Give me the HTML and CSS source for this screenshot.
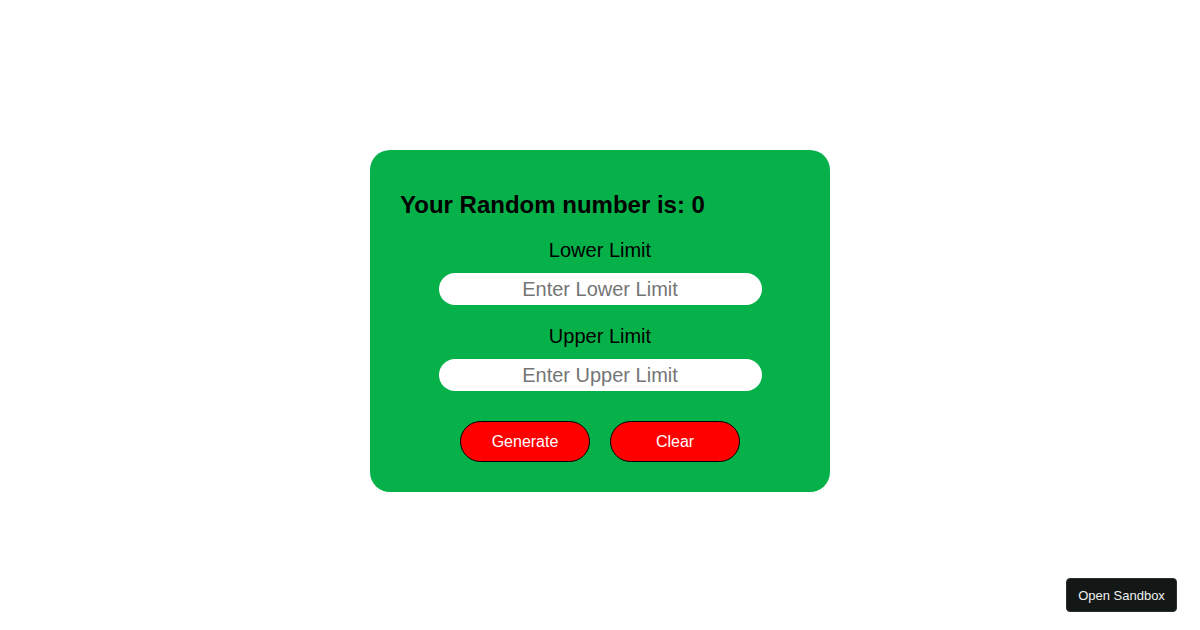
FILE: index.html
```html
<!DOCTYPE html>
<html>
<head>
<meta charset="utf-8">
<link rel="stylesheet" href="styles.css">
</head>
<body>
<main class="page">
  <section class="card">
    <h2 class="result">Your Random number is: 0</h2>
    <div class="field">
      <label class="label" for="lower">Lower Limit</label>
      <input class="input" id="lower" type="number" placeholder="Enter Lower Limit">
    </div>
    <div class="field">
      <label class="label" for="upper">Upper Limit</label>
      <input class="input" id="upper" type="number" placeholder="Enter Upper Limit">
    </div>
    <div class="actions">
      <button class="btn">Generate</button>
      <button class="btn">Clear</button>
    </div>
  </section>
</main>
<a class="sandbox" href="#">Open Sandbox</a>
</body>
</html>
```
FILE: styles.css
```css
html, body {
  margin: 0;
  padding: 0;
  background: #ffffff;
  font-family: "Liberation Sans", Arial, sans-serif;
}
.page {
  height: 630px;
  box-sizing: border-box;
  padding-top: 150px;
  display: flex;
  justify-content: center;
  align-items: flex-start;
}
.card {
  width: 460px;
  box-sizing: border-box;
  background: #07b14a;
  border-radius: 20px;
  padding: 41px 30px 30px;
  display: flex;
  flex-direction: column;
  align-items: center;
}
.result {
  align-self: stretch;
  margin: 0 0 20px;
  font-size: 24px;
  font-weight: bold;
  line-height: 28px;
  color: #000;
}
.field {
  display: flex;
  flex-direction: column;
  align-items: center;
  margin-bottom: 20px;
}
.field + .field { margin-bottom: 30px; }
.label {
  font-size: 20px;
  line-height: 23px;
  color: #000;
  margin-bottom: 11px;
}
.input {
  width: 323px;
  height: 32px;
  box-sizing: border-box;
  border: none;
  border-radius: 16px;
  background: #fff;
  font-family: "Liberation Sans", Arial, sans-serif;
  font-size: 20px;
  text-align: center;
  padding: 0 10px;
  outline: none;
  -moz-appearance: textfield;
}
.input::-webkit-outer-spin-button,
.input::-webkit-inner-spin-button { -webkit-appearance: none; margin: 0; }
.input::placeholder { color: #757575; }
.actions {
  display: flex;
  gap: 20px;
}
.btn {
  width: 130px;
  height: 41px;
  box-sizing: border-box;
  background: #ff0000;
  color: #fff;
  border: 1px solid #000;
  border-radius: 21px;
  font-family: "Liberation Sans", Arial, sans-serif;
  font-size: 16px;
  padding: 0;
  cursor: pointer;
}
.sandbox {
  position: fixed;
  right: 23px;
  bottom: 18px;
  width: 111px;
  height: 34px;
  box-sizing: border-box;
  display: flex;
  align-items: center;
  justify-content: center;
  background: #131816;
  color: #f0f0f0;
  border-radius: 4px;
  border: 1px solid #2a2f2d;
  font-size: 13px;
  text-decoration: none;
}
```
